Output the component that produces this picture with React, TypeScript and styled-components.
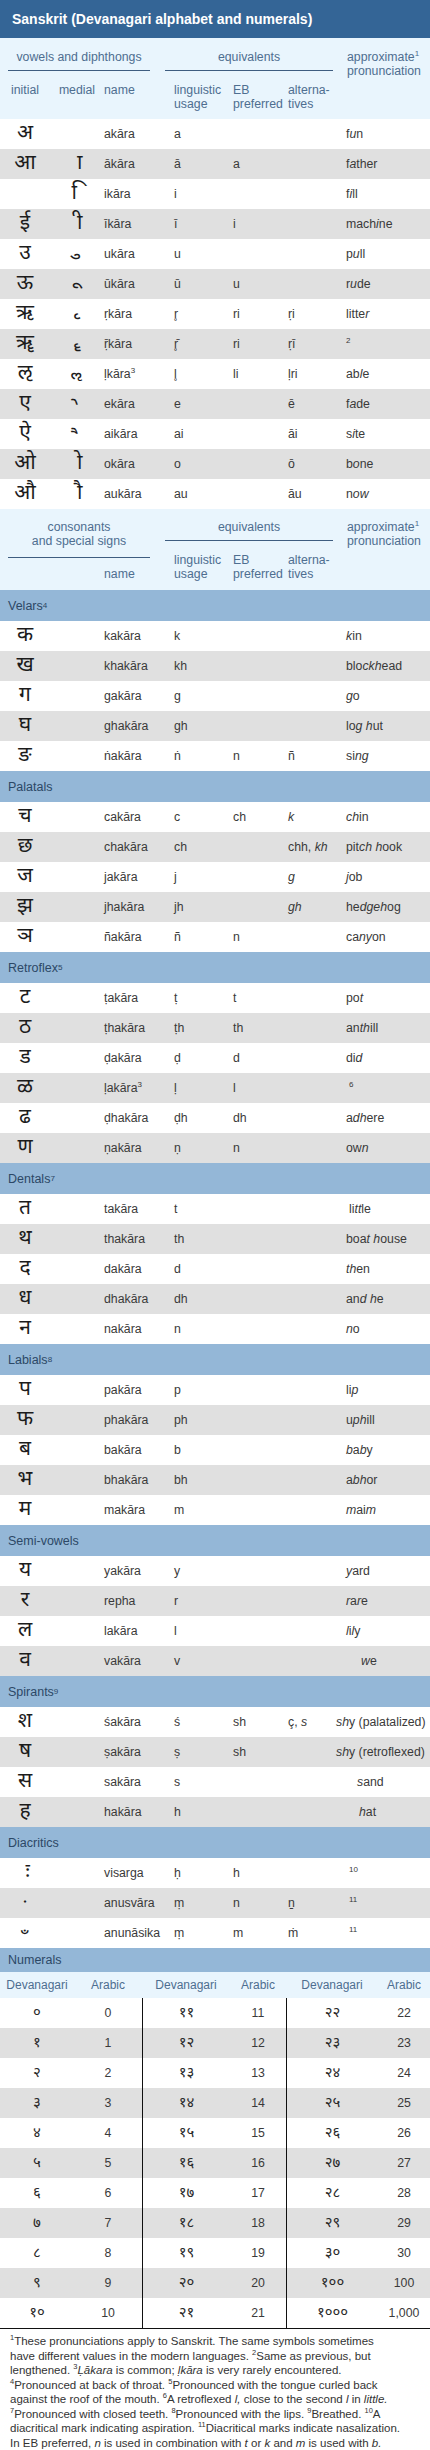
import { Fragment } from "react";
import styled, { createGlobalStyle } from "styled-components";

const GlobalStyle = createGlobalStyle`
  body {
    margin: 0;
    background: #fff;
    font-family: "Liberation Sans", Arial, sans-serif;
    color: #3a3a3a;
  }
`;

const DEVA = `"Noto Sans Devanagari", "Lohit Devanagari", "Mangal", "FreeSans", sans-serif`;
const COLS = "50px 54px 70px 59px 55px 58px 1fr";
const NB = "\u00A0";

// initial, medial, name, linguistic, EB, alternatives, pronunciation, [medial dy, pron shift]
type Line = [string, string, string, string, string, string, string, number?, number?];
// sign, name, linguistic, EB, alternatives, pronunciation, [pron shift, sign dy]
type CRow = [string, string, string, string, string, string, number?, number?];

const vowels: Line[] = [
  ["अ", "", "akāra", "a", "", "", "f_u_n"],
  ["आ", NB + "ा", "ākāra", "ā", "a", "", "f_a_ther"],
  ["", NB + "ि", "ikāra", "i", "", "", "f_i_ll"],
  ["ई", NB + "ी", "īkāra", "ī", "i", "", "mach_i_ne"],
  ["उ", NB + "ु", "ukāra", "u", "", "", "p_u_ll", -5],
  ["ऊ", NB + "ू", "ūkāra", "ū", "u", "", "r_u_de", -6],
  ["ऋ", NB + "ृ", "ṛkāra", "r̥", "ri", "ṛi", "litte_r_", -5],
  ["ॠ", NB + "ॄ", "ṝkāra", "r̥̄", "ri", "ṛī", "^2", -6],
  ["ऌ", NB + "ॢ", "ḷkāra^3", "l̥", "li", "ḷri", "ab_l_e", -6],
  ["ए", NB + "े", "ekāra", "e", "", "ē", "f_a_de", 8],
  ["ऐ", NB + "ै", "aikāra", "ai", "", "āi", "s_i_te", 8],
  ["ओ", NB + "ो", "okāra", "o", "", "ō", "b_o_ne"],
  ["औ", NB + "ौ", "aukāra", "au", "", "āu", "n_ow_"],
];

const sections: { title: string; rows: CRow[] }[] = [
  {
    title: "Velars^4",
    rows: [
      ["क", "kakāra", "k", "", "", "_k_in"],
      ["ख", "khakāra", "kh", "", "", "blo_ckh_ead"],
      ["ग", "gakāra", "g", "", "", "_g_o"],
      ["घ", "ghakāra", "gh", "", "", "lo_g h_ut"],
      ["ङ", "ṅakāra", "ṅ", "n", "ñ", "si_ng_"],
    ],
  },
  {
    title: "Palatals",
    rows: [
      ["च", "cakāra", "c", "ch", "_k_", "_ch_in"],
      ["छ", "chakāra", "ch", "", "chh, _kh_", "pit_ch h_ook"],
      ["ज", "jakāra", "j", "", "_g_", "_j_ob"],
      ["झ", "jhakāra", "jh", "", "_gh_", "he_dgeh_og"],
      ["ञ", "ñakāra", "ñ", "n", "", "ca_ny_on"],
    ],
  },
  {
    title: "Retroflex^5",
    rows: [
      ["ट", "ṭakāra", "ṭ", "t", "", "po_t_"],
      ["ठ", "ṭhakāra", "ṭh", "th", "", "an_th_ill"],
      ["ड", "ḍakāra", "ḍ", "d", "", "di_d_"],
      ["ळ", "ḷakāra^3", "ḷ", "l", "", "^6", 3],
      ["ढ", "ḍhakāra", "ḍh", "dh", "", "a_dh_ere"],
      ["ण", "ṇakāra", "ṇ", "n", "", "ow_n_"],
    ],
  },
  {
    title: "Dentals^7",
    rows: [
      ["त", "takāra", "t", "", "", "li_tt_le", 3],
      ["थ", "thakāra", "th", "", "", "boa_t h_ouse"],
      ["द", "dakāra", "d", "", "", "_th_en"],
      ["ध", "dhakāra", "dh", "", "", "an_d h_e"],
      ["न", "nakāra", "n", "", "", "_n_o"],
    ],
  },
  {
    title: "Labials^8",
    rows: [
      ["प", "pakāra", "p", "", "", "li_p_"],
      ["फ", "phakāra", "ph", "", "", "u_ph_ill"],
      ["ब", "bakāra", "b", "", "", "_b_a_b_y"],
      ["भ", "bhakāra", "bh", "", "", "a_bh_or"],
      ["म", "makāra", "m", "", "", "_m_ai_m_"],
    ],
  },
  {
    title: "Semi-vowels",
    rows: [
      ["य", "yakāra", "y", "", "", "_y_ard"],
      ["र", "repha", "r", "", "", "_r_a_r_e"],
      ["ल", "lakāra", "l", "", "", "_l_i_l_y"],
      ["व", "vakāra", "v", "", "", "_w_e", 15],
    ],
  },
  {
    title: "Spirants^9",
    rows: [
      ["श", "śakāra", "ś", "sh", "ç, _s_", "_sh_y (palatalized)", -10],
      ["ष", "ṣakāra", "ṣ", "sh", "", "_sh_y (retroflexed)", -10],
      ["स", "sakāra", "s", "", "", "_s_and", 11],
      ["ह", "hakāra", "h", "", "", "_h_at", 13],
    ],
  },
  {
    title: "Diacritics",
    rows: [
      [NB + "ः", "visarga", "ḥ", "h", "", "^10", 3],
      [NB + "ं", "anusvāra", "ṃ", "n", "ṉ", "^11", 3, 10],
      [NB + "ँ", "anunāsika", "ṃ", "m", "ṁ", "^11", 3, 10],
    ],
  },
];

const notes = [
  "^1These pronunciations apply to Sanskrit. The same symbols sometimes",
  "have different values in the modern languages. ^2Same as previous, but",
  "lengthened. ^3_Ḷākara_ is common; _ḷkāra_ is very rarely encountered.",
  "^4Pronounced at back of throat. ^5Pronounced with the tongue curled back",
  "against the roof of the mouth. ^6A retroflexed _l,_ close to the second _l_ in _little._",
  "^7Pronounced with closed teeth. ^8Pronounced with the lips. ^9Breathed. ^10A",
  "diacritical mark indicating aspiration. ^11Diacritical marks indicate nasalization.",
  "In EB preferred, _n_ is used in combination with _t_ or _k_ and _m_ is used with _b._",
];

const toDev = (n: number) => String(n).replace(/\d/g, (d) => "०१२३४५६७८९"[+d]);
const numberRows = Array.from({ length: 11 }, (_, i) => {
  const third = i === 9 ? 100 : i === 10 ? 1000 : 22 + i;
  return [i, 11 + i, third];
});

const rich = (s: string) =>
  s
    .split(/(_[^_]+_|\^\d+)/)
    .filter(Boolean)
    .map((p, i) =>
      p.startsWith("_") ? (
        <Em key={i}>{p.slice(1, -1)}</Em>
      ) : p.startsWith("^") ? (
        <Sup key={i}>{p.slice(1)}</Sup>
      ) : (
        p
      )
    );

const EquivalentsHead = () => (
  <HeadGroup $w={172}>
    <GroupLabel $l={-9} $r={13} $pb={6}>
      equivalents
    </GroupLabel>
    <SubLabels $cols="59px 55px 58px" $gap={12}>
      <SubLabel>
        linguistic
        <br />
        usage
      </SubLabel>
      <SubLabel>
        EB
        <br />
        preferred
      </SubLabel>
      <SubLabel>
        alterna-
        <br />
        tives
      </SubLabel>
    </SubLabels>
  </HeadGroup>
);

const ApproxHead = () => (
  <ApproxLabel>
    approximate<Sup>1</Sup>
    <br />
    pronunciation
  </ApproxLabel>
);

export default function App() {
  return (
    <Page>
      <GlobalStyle />
      <TitleBar>Sanskrit (Devanagari alphabet and numerals)</TitleBar>

      <HeadBlock $top={12} $bottom={8}>
        <HeadGroup $w={174}>
          <GroupLabel $l={8} $r={24} $pb={6}>
            vowels and diphthongs
          </GroupLabel>
          <SubLabels $cols="50px 54px 70px" $gap={12}>
            <SubLabel $align="center">initial</SubLabel>
            <SubLabel $align="center">medial</SubLabel>
            <SubLabel>name</SubLabel>
          </SubLabels>
        </HeadGroup>
        <EquivalentsHead />
        <ApproxHead />
      </HeadBlock>

      {vowels.map((v, i) => (
        <Row key={v[2]} $shade={i % 2 === 1}>
          <Glyph>{v[0]}</Glyph>
          <Glyph $dy={v[7]}>{v[1]}</Glyph>
          <Cell>{rich(v[2])}</Cell>
          <Cell>{v[3]}</Cell>
          <Cell>{v[4]}</Cell>
          <Cell>{v[5]}</Cell>
          <Cell $shift={v[8]}>{rich(v[6])}</Cell>
        </Row>
      ))}

      <HeadBlock $top={11} $bottom={9}>
        <HeadGroup $w={174}>
          <GroupLabel $l={8} $r={24} $pb={9}>
            consonants
            <br />
            and special signs
          </GroupLabel>
          <SubLabels $cols="50px 54px 70px" $gap={9}>
            <span />
            <span />
            <SubLabel>name</SubLabel>
          </SubLabels>
        </HeadGroup>
        <EquivalentsHead />
        <ApproxHead />
      </HeadBlock>

      {sections.map((s) => (
        <section key={s.title}>
          <SectionBar>{rich(s.title)}</SectionBar>
          {s.rows.map((r, i) => (
            <Row key={r[1]} $shade={i % 2 === 1}>
              <Glyph $dy={r[7]}>{r[0]}</Glyph>
              <span />
              <Cell>{rich(r[1])}</Cell>
              <Cell>{r[2]}</Cell>
              <Cell>{r[3]}</Cell>
              <Cell>{rich(r[4])}</Cell>
              <Cell $shift={r[6]}>{rich(r[5])}</Cell>
            </Row>
          ))}
        </section>
      ))}

      <NumBar>Numerals</NumBar>
      <NumTable>
        <NumHead>
          {[0, 1, 2].map((g) => (
            <Fragment key={g}>
              <NumLabel>Devanagari</NumLabel>
              <NumLabel>Arabic</NumLabel>
            </Fragment>
          ))}
        </NumHead>
        {numberRows.map((nums, i) => (
          <NumRow key={i} $shade={i % 2 === 1}>
            {nums.map((n, g) => (
              <Fragment key={g}>
                <NumGlyph $sep={g > 0}>{toDev(n)}</NumGlyph>
                <NumArabic>{n === 1000 ? "1,000" : n}</NumArabic>
              </Fragment>
            ))}
          </NumRow>
        ))}
      </NumTable>

      <Notes>
        {notes.map((n, i) => (
          <NoteLine key={i}>{rich(n)}</NoteLine>
        ))}
      </Notes>
    </Page>
  );
}

const Page = styled.div`
  width: 430px;
`;

const TitleBar = styled.div`
  height: 38px;
  display: flex;
  align-items: center;
  padding-left: 12px;
  background: #346596;
  color: #fff;
  font-size: 14px;
  font-weight: bold;
`;

const HeadBlock = styled.div<{ $top: number; $bottom: number }>`
  display: flex;
  padding: ${(p) => p.$top}px 0 ${(p) => p.$bottom}px;
  background: #e9f5fd;
  color: #4e6e90;
  font-size: 12.3px;
  line-height: 14px;
`;

const HeadGroup = styled.div<{ $w: number }>`
  display: flex;
  flex-direction: column;
  width: ${(p) => p.$w}px;
  flex-shrink: 0;
`;

const GroupLabel = styled.div<{ $l: number; $r: number; $pb: number }>`
  margin: 0 ${(p) => p.$r}px 0 ${(p) => p.$l}px;
  padding-bottom: ${(p) => p.$pb}px;
  border-bottom: 1px solid #3e5d80;
  text-align: center;
`;

const SubLabels = styled.div<{ $cols: string; $gap: number }>`
  display: grid;
  grid-template-columns: ${(p) => p.$cols};
  margin-top: ${(p) => p.$gap}px;
`;

const SubLabel = styled.div<{ $align?: string }>`
  text-align: ${(p) => p.$align ?? "left"};
  white-space: nowrap;
`;

const ApproxLabel = styled.div`
  padding-left: 1px;
  white-space: nowrap;
`;

const Row = styled.div<{ $shade: boolean }>`
  display: grid;
  grid-template-columns: ${COLS};
  align-items: center;
  height: 30px;
  background: ${(p) => (p.$shade ? "#e0e0e0" : "#fff")};
`;

const Glyph = styled.div<{ $dy?: number }>`
  text-align: center;
  font-family: ${DEVA};
  font-size: 21px;
  line-height: 30px;
  color: #1c1c1c;
  white-space: nowrap;
  transform: translateY(${(p) => p.$dy ?? 0}px);
`;

const Cell = styled.div<{ $shift?: number }>`
  margin-left: ${(p) => p.$shift ?? 0}px;
  font-size: 12.3px;
  white-space: nowrap;
  color: #3a3a3a;
`;

const SectionBar = styled.div`
  height: 31px;
  display: flex;
  align-items: center;
  padding-left: 8px;
  background: #94b7d7;
  color: #2c4866;
  font-size: 12.5px;
`;

const Em = styled.i`
  font-style: italic;
`;

const Sup = styled.sup`
  font-size: 0.65em;
  line-height: 0;
  vertical-align: super;
`;

const NUMCOLS = "74px 68px 88px 56px 92px 1fr";

const NumBar = styled(SectionBar)`
  height: 24px;
`;

const NumTable = styled.div`
  border-bottom: 1px solid #111;
`;

const NumHead = styled.div`
  display: grid;
  grid-template-columns: ${NUMCOLS};
  align-items: center;
  height: 26px;
  background: #e9f5fd;
`;

const NumLabel = styled.div`
  text-align: center;
  font-size: 12px;
  color: #4e6e90;
`;

const NumRow = styled.div<{ $shade: boolean }>`
  display: grid;
  grid-template-columns: ${NUMCOLS};
  height: 30px;
  background: ${(p) => (p.$shade ? "#e0e0e0" : "#fff")};
`;

const NumGlyph = styled.div<{ $sep: boolean }>`
  display: flex;
  align-items: center;
  justify-content: center;
  border-left: ${(p) => (p.$sep ? "1px solid #111" : "none")};
  font-family: ${DEVA};
  font-size: 15px;
  color: #2a2a2a;
`;

const NumArabic = styled.div`
  display: flex;
  align-items: center;
  justify-content: center;
  font-size: 12.3px;
  color: #3a3a3a;
`;

const Notes = styled.div`
  padding: 5px 10px 0;
  font-size: 11.5px;
  line-height: 14.5px;
  color: #333;
`;

const NoteLine = styled.div`
  white-space: nowrap;
`;
